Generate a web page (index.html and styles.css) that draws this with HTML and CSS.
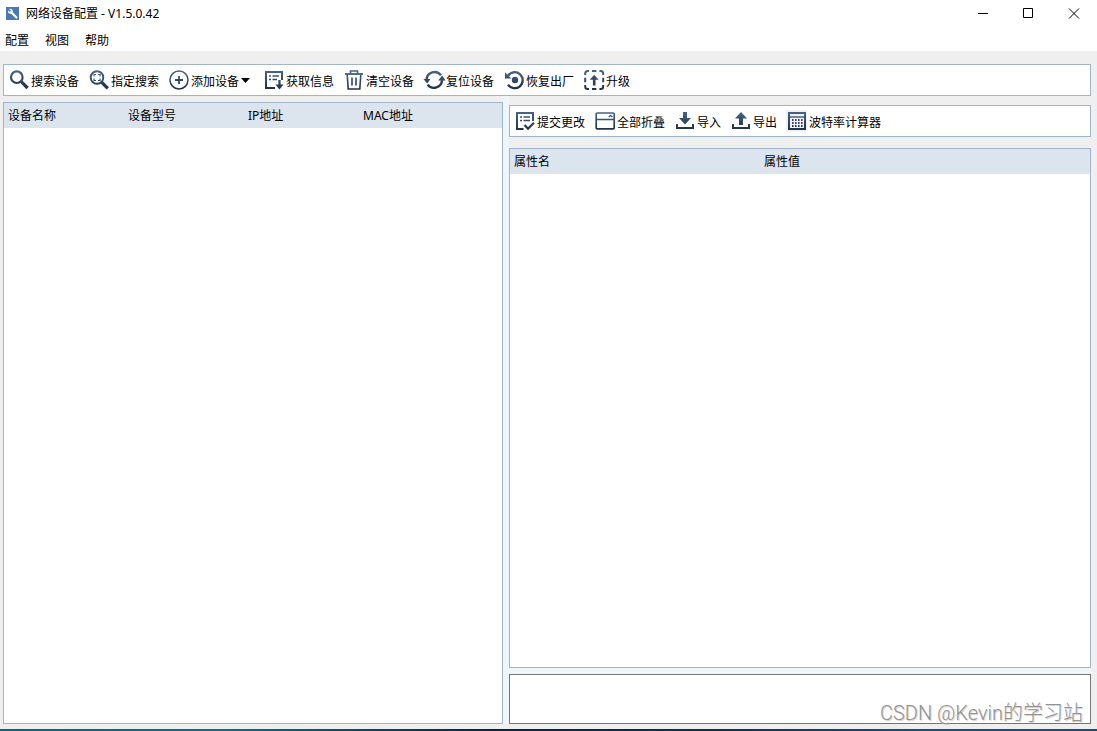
FILE: index.html
```html
<!DOCTYPE html>
<html lang="zh-CN">
<head>
<meta charset="utf-8">
<title>网络设备配置 - V1.5.0.42</title>
<link rel="stylesheet" href="styles.css">
</head>
<body>
<svg class="defs" aria-hidden="true">
  <defs>
    <linearGradient id="ink" gradientUnits="userSpaceOnUse" x1="0" y1="0" x2="0" y2="20">
      <stop offset="0" stop-color="#47688a"/>
      <stop offset="1" stop-color="#1f2c42"/>
    </linearGradient>
  </defs>
</svg>
<div class="window">
  <header class="titlebar">
    <svg class="app-icon" viewBox="0 0 13 13" aria-hidden="true">
      <rect width="13" height="13" fill="#4a78b5"/>
      <path d="M5.5 5.5L10.5 10.5" stroke="#fff" stroke-width="2.2" stroke-linecap="round"/>
      <path d="M2 3.2L3.8 5L5 3.8L3.2 2C5.4 1.3 7.4 3.3 6.6 5.4L5.4 6.6C3.3 7.4 1.3 5.4 2 3.2Z" fill="#fff"/>
    </svg>
    <h1 class="title">网络设备配置 - V1.5.0.42</h1>
    <div class="controls">
      <button class="control" type="button" aria-label="最小化"><svg viewBox="0 0 11 11"><path d="M1 5.5H11"/></svg></button>
      <button class="control" type="button" aria-label="最大化"><svg viewBox="0 0 11 11"><path d="M.5 .5H9.5V9.5H.5Z"/></svg></button>
      <button class="control" type="button" aria-label="关闭"><svg viewBox="0 0 11 11"><path d="M0 .5L10 10.5M10 .5L0 10.5"/></svg></button>
    </div>
  </header>
  <nav class="menubar">
    <button class="menu" type="button">配置</button>
    <button class="menu" type="button">视图</button>
    <button class="menu" type="button">帮助</button>
  </nav>

  <div class="toolbar main-toolbar">
    <button class="tool" type="button">
      <svg class="icon" viewBox="0 0 20 20"><circle cx="6.8" cy="7.2" r="5.8" stroke-width="2.2"/><path d="M11 11.4L17.6 18" stroke-width="3.2"/></svg>
      <span>搜索设备</span>
    </button>
    <button class="tool" type="button">
      <svg class="icon" viewBox="0 0 20 20"><circle cx="7" cy="7.5" r="6.3" stroke-width="1.9"/><path d="M11.4 12L17.8 18.4" stroke-width="3.2"/><path d="M4 6.5V4.5H6M8 4.5H10V6.5M10 8.5V10.5H8M6 10.5H4V8.5" stroke-width="1.1"/></svg>
      <span>指定搜索</span>
    </button>
    <button class="tool" type="button">
      <svg class="icon" viewBox="0 0 20 20"><circle cx="9" cy="10" r="9" stroke-width="1.5"/><path d="M5 10H13M9 6V14" stroke-width="1.8"/></svg>
      <span>添加设备</span>
      <svg class="caret" viewBox="0 0 9 5"><path d="M0 0H9L4.5 5Z"/></svg>
    </button>
    <button class="tool" type="button">
      <svg class="icon" viewBox="0 0 20 20"><path d="M10 18H1V2H17V10" stroke-width="2"/><path d="M4 6H6M7.5 6H14M4 9.5H6M7.5 9.5H12" stroke-width="1.7"/><path d="M14.5 10V17" stroke-width="2.2"/><path class="solid" d="M10.5 14.5H18.5L14.5 19.5Z"/></svg>
      <span>获取信息</span>
    </button>
    <button class="tool" type="button">
      <svg class="icon" viewBox="0 0 20 20"><path d="M0 4H18" stroke-width="1.8"/><path d="M5.5 3.5V1H12.5V3.5M2.2 4.5L3.2 19H14.8L15.8 4.5" stroke-width="1.6"/><path d="M7 7.5V15.5M11 7.5V15.5" stroke-width="1.6"/></svg>
      <span>清空设备</span>
    </button>
    <button class="tool" type="button">
      <svg class="icon" viewBox="0 0 20 20"><path d="M16 5.3A8 8 0 0 0 1.6 9.8M2.6 14.6A8 8 0 0 0 17 10" stroke-width="2.4"/><path class="solid" d="M-1.6 9H5.4L2.2 13.6ZM13.2 10.6H20.6L17.2 5.6Z"/></svg>
      <span>复位设备</span>
    </button>
    <button class="tool" type="button">
      <svg class="icon" viewBox="0 0 20 20"><path d="M3.2 5.5A8 8 0 1 1 3 14.6" stroke-width="2.3"/><circle class="solid" cx="10" cy="10" r="3.2"/><path class="solid" d="M0 2.2V8.6H6.4Z"/></svg>
      <span>恢复出厂</span>
    </button>
    <button class="tool" type="button">
      <svg class="icon" viewBox="0 0 20 20"><path d="M.2 5V3.5Q.2 1 2.7 1H4M7 1H11.4M14.4 1H15.7Q18.2 1 18.2 3.5V5M18.2 7.8V12.2M18.2 15V16.5Q18.2 19 15.7 19H14.4M11.4 19H7M4 19H2.7Q.2 19 .2 16.5V15M.2 12.2V7.8" stroke-width="2"/><path d="M9.2 8V15.5" stroke-width="2.6"/><path class="solid" d="M4.8 9.8L9.2 4.8L13.6 9.8Z"/></svg>
      <span>升级</span>
    </button>
  </div>

  <main class="workspace">
    <section class="panel devices">
      <table class="grid">
        <colgroup><col class="col-name"><col class="col-model"><col class="col-ip"><col></colgroup>
        <thead><tr><th scope="col">设备名称</th><th scope="col">设备型号</th><th scope="col">IP地址</th><th scope="col">MAC地址</th></tr></thead>
      </table>
    </section>
    <div class="splitter"></div>
    <section class="details">
      <div class="toolbar-area">
        <div class="toolbar">
          <button class="tool" type="button">
            <svg class="icon" viewBox="0 0 20 20"><path d="M7.5 18H1V2H17V10" stroke-width="2"/><path d="M4 6H6M7.5 6H14M4 9.5H6M7.5 9.5H14" stroke-width="1.7"/><path d="M8.5 14L12 17.7L18 11.7" stroke-width="2.3"/></svg>
            <span>提交更改</span>
          </button>
          <button class="tool" type="button">
            <svg class="icon" viewBox="0 0 20 20"><rect x=".2" y="2" width="18" height="15.8" rx="1" stroke-width="1.7"/><path d="M.2 8.5H18.2" stroke-width="1.5"/><path d="M12.8 6L14.6 4.3L16.4 6" stroke-width="1.3"/></svg>
            <span>全部折叠</span>
          </button>
          <button class="tool" type="button">
            <svg class="icon" viewBox="0 0 20 20"><path d="M1 13V17H17V13" stroke-width="2"/><path d="M9 1V8" stroke-width="4"/><path class="solid" d="M3 7H15L9 13.5Z"/></svg>
            <span>导入</span>
          </button>
          <button class="tool" type="button">
            <svg class="icon" viewBox="0 0 20 20"><path d="M1 13V17H17V13" stroke-width="2"/><path d="M9 6V14" stroke-width="4"/><path class="solid" d="M3 7.5H15L9 1Z"/></svg>
            <span>导出</span>
          </button>
          <button class="tool" type="button">
            <svg class="icon" viewBox="0 0 20 20"><rect class="plate" x="-2" y="-1" width="21" height="22"/><path d="M1 2H17V18H1Z" stroke-width="2"/><path d="M1 6H17" stroke-width="1.4"/><path d="M4 9H15M4 12H15M4 15H15" stroke-width="1.8" stroke-dasharray="1.6 1.4"/></svg>
            <span>波特率计算器</span>
          </button>
        </div>
      </div>
      <div class="panel properties">
        <table class="grid">
          <colgroup><col class="col-prop"><col></colgroup>
          <thead><tr><th scope="col">属性名</th><th scope="col">属性值</th></tr></thead>
        </table>
      </div>
      <div class="output">
        <textarea class="log" aria-label="说明" readonly></textarea>
        <span class="watermark">CSDN @Kevin的学习站</span>
      </div>
    </section>
  </main>
  <div class="desktop-edge"></div>
</div>
</body>
</html>
```
FILE: styles.css
```css
* { box-sizing: border-box; }

body {
  margin: 0;
  background: #efefef;
  color: #000;
  font: 12px/16px "Noto Sans", "Noto Sans CJK SC", sans-serif;
}

button {
  margin: 0;
  padding: 0;
  border: 0;
  background: none;
  color: inherit;
  font: inherit;
}

.defs { position: absolute; width: 0; height: 0; }

.window {
  display: flex;
  flex-direction: column;
  height: 100vh;
}

/* Title bar and menus */
.titlebar {
  display: flex;
  align-items: center;
  height: 27px;
  padding-left: 6px;
  background: #fff;
}

.app-icon { width: 13px; height: 13px; }

.title {
  margin: 0 auto 0 7px;
  font-size: 12px;
  font-weight: 400;
}

.controls { display: flex; align-self: stretch; }

.control {
  display: flex;
  align-items: center;
  justify-content: center;
  width: 46px;
}

.control svg {
  width: 11px;
  height: 11px;
  overflow: visible;
  fill: none;
  stroke: #000;
}

.menubar {
  display: flex;
  align-items: center;
  gap: 16px;
  height: 24px;
  padding: 3px 0 0 5px;
  background: #fff;
}

/* Toolbars */
.toolbar {
  display: flex;
  align-items: center;
  gap: 11px;
  height: 32px;
  padding: 0 6px;
  border: 1px solid #a0b4ca;
  background: #fff;
}

.main-toolbar { margin: 13px 6px 0 3px; }

.tool {
  display: flex;
  align-items: center;
  gap: 1px;
  white-space: nowrap;
}

.tool span { padding-top: 4px; }

.icon {
  width: 20px;
  height: 20px;
  overflow: visible;
  fill: none;
  stroke: url(#ink);
}

.icon .solid { fill: url(#ink); stroke: none; }
.icon .plate { fill: #f0f1f8; stroke: none; }

.caret { width: 9px; height: 5px; margin: 0 4px 0 1px; }

/* Workspace */
.workspace {
  display: grid;
  flex: 1;
  grid-template-columns: minmax(0, 500fr) 6px minmax(0, 582fr);
  min-height: 0;
  padding: 0 6px 5px 3px;
}

.panel {
  border: 1px solid #a0b4ca;
  background: #fff;
}

.devices { margin-top: 6px; }
.splitter { background: #eff6fa; }

.details {
  display: flex;
  flex-direction: column;
  background: #eff6fa;
}

.toolbar-area { padding: 9px 0 11px; background: #efefef; }
.properties { flex: 1; }

.grid {
  width: 100%;
  border-collapse: collapse;
  table-layout: fixed;
}

.grid th {
  height: 25px;
  padding: 0 4px;
  background: #dce4ee;
  font-weight: 400;
  text-align: left;
}

.col-name, .col-model { width: 120px; }
.col-ip { width: 115px; }
.col-prop { width: 250px; }

.output { position: relative; display: flex; margin-top: 6px; }

.log {
  flex: 1;
  height: 50px;
  border: 1px solid #767679;
  background: #fff;
  resize: none;
}

.watermark {
  position: absolute;
  right: 8px;
  bottom: -1px;
  color: #929292;
  font: 300 20px/24px Roboto, "Noto Sans CJK SC", sans-serif;
  text-shadow: 1px 1px 1px #ccc;
  white-space: nowrap;
}

.desktop-edge {
  height: 2px;
  background: linear-gradient(90deg, #006491, #00719c 20%, #08233f 45%, #0c3053 65%, #105291 85%, #174b79);
}
```
